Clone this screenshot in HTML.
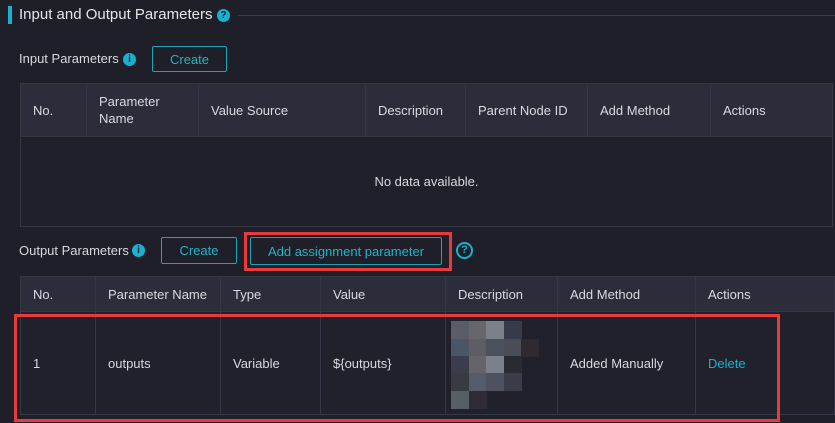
<!DOCTYPE html>
<html><head><meta charset="utf-8"><style>
*{margin:0;padding:0;box-sizing:border-box}
body{width:835px;height:423px;background:#1e1f28;font-family:"Liberation Sans",sans-serif;color:#d8dae0;position:relative;overflow:hidden;font-size:13px}
.a{position:absolute}
.btn{position:absolute;border:1px solid #1fa3b5;color:#22b3c8;font-size:13px;display:flex;align-items:center;justify-content:center;border-radius:2px}
.info{position:absolute;width:13px;height:13px;border-radius:50%;background:#1ab0d0;color:#1e1f28;font-size:10px;font-weight:bold;text-align:center;line-height:13px}
table{position:absolute;border-collapse:collapse;font-size:13px}
td,th{border:1px solid #353746;text-align:left;font-weight:normal;padding:0 0 0 12px}
th{background:#2b2d3b;color:#d8dae0}
.px{position:absolute;width:18px;height:18px}
</style></head><body>
<div class="a" style="left:8px;top:6px;width:4px;height:18px;background:#1ab0d0"></div>
<div class="a" style="left:19px;top:6px;font-size:15px;color:#e4e6ea">Input and Output Parameters</div>
<div class="info" style="left:217px;top:9px">?</div>
<div class="a" style="left:238px;top:15px;width:597px;height:1px;background:#3a3c4a"></div>

<div class="a" style="left:19px;top:51px;font-size:13px">Input Parameters</div>
<div class="info" style="left:123px;top:53px">i</div>
<div class="btn" style="left:152px;top:46px;width:75px;height:26px">Create</div>

<table style="left:20px;top:83px;width:813px">
<tr style="height:53px"><th style="width:66px">No.</th><th style="width:112px;line-height:17px">Parameter<br>Name</th><th style="width:167px">Value Source</th><th style="width:100px">Description</th><th style="width:122px">Parent Node ID</th><th style="width:123px">Add Method</th><th>Actions</th></tr>
<tr style="height:90px"><td colspan="7" style="text-align:center;padding:0;background:#1f2029">No data available.</td></tr>
</table>

<div class="a" style="left:19px;top:243px">Output Parameters</div>
<div class="info" style="left:132px;top:244px">i</div>
<div class="btn" style="left:161px;top:237px;width:76px;height:27px">Create</div>
<div class="btn" style="left:250px;top:237px;width:192px;height:28px">Add assignment parameter</div>
<div class="a" style="left:244px;top:232px;width:208px;height:39px;border:3px solid #e8393b"></div>
<div class="a" style="left:456px;top:242px;width:17px;height:17px;border:2px solid #1ab0d0;border-radius:50%;color:#1ab0d0;font-size:11px;font-weight:bold;text-align:center;line-height:13px">?</div>

<table style="left:20px;top:276px;width:815px">
<tr style="height:35px"><th style="width:75px">No.</th><th style="width:125px">Parameter Name</th><th style="width:100px">Type</th><th style="width:125px">Value</th><th style="width:112px">Description</th><th style="width:138px">Add Method</th><th>Actions</th></tr>
<tr style="height:103px;background:#20212a"><td>1</td><td>outputs</td><td>Variable</td><td>${outputs}</td><td></td><td>Added Manually</td><td style="color:#1ab0d0">Delete</td></tr>
</table>
<div class="px" style="left:451px;top:321px;background:#5a5d66"></div><div class="px" style="left:469px;top:321px;background:#66666b"></div><div class="px" style="left:486px;top:321px;background:#7c808a"></div><div class="px" style="left:504px;top:321px;background:#363a4a"></div>
<div class="px" style="left:451px;top:339px;background:#4a5566"></div><div class="px" style="left:469px;top:339px;background:#5d5d63"></div><div class="px" style="left:486px;top:339px;background:#4a505c"></div><div class="px" style="left:504px;top:339px;background:#4a4d58"></div><div class="px" style="left:521px;top:339px;background:#2e2a30"></div>
<div class="px" style="left:451px;top:356px;background:#3b3d4d"></div><div class="px" style="left:469px;top:356px;background:#65646d"></div><div class="px" style="left:486px;top:356px;background:#7c808a"></div><div class="px" style="left:504px;top:356px;background:#2a2a33"></div>
<div class="px" style="left:451px;top:373px;background:#393b42"></div><div class="px" style="left:469px;top:373px;background:#565c6b"></div><div class="px" style="left:486px;top:373px;background:#4d525e"></div><div class="px" style="left:504px;top:373px;background:#3a3d47"></div>
<div class="px" style="left:451px;top:391px;background:#565e66"></div><div class="px" style="left:469px;top:391px;background:#2e2b36"></div>
<div class="a" style="left:14px;top:314px;width:766px;height:108px;border:3px solid #e8393b"></div>
</body></html>
